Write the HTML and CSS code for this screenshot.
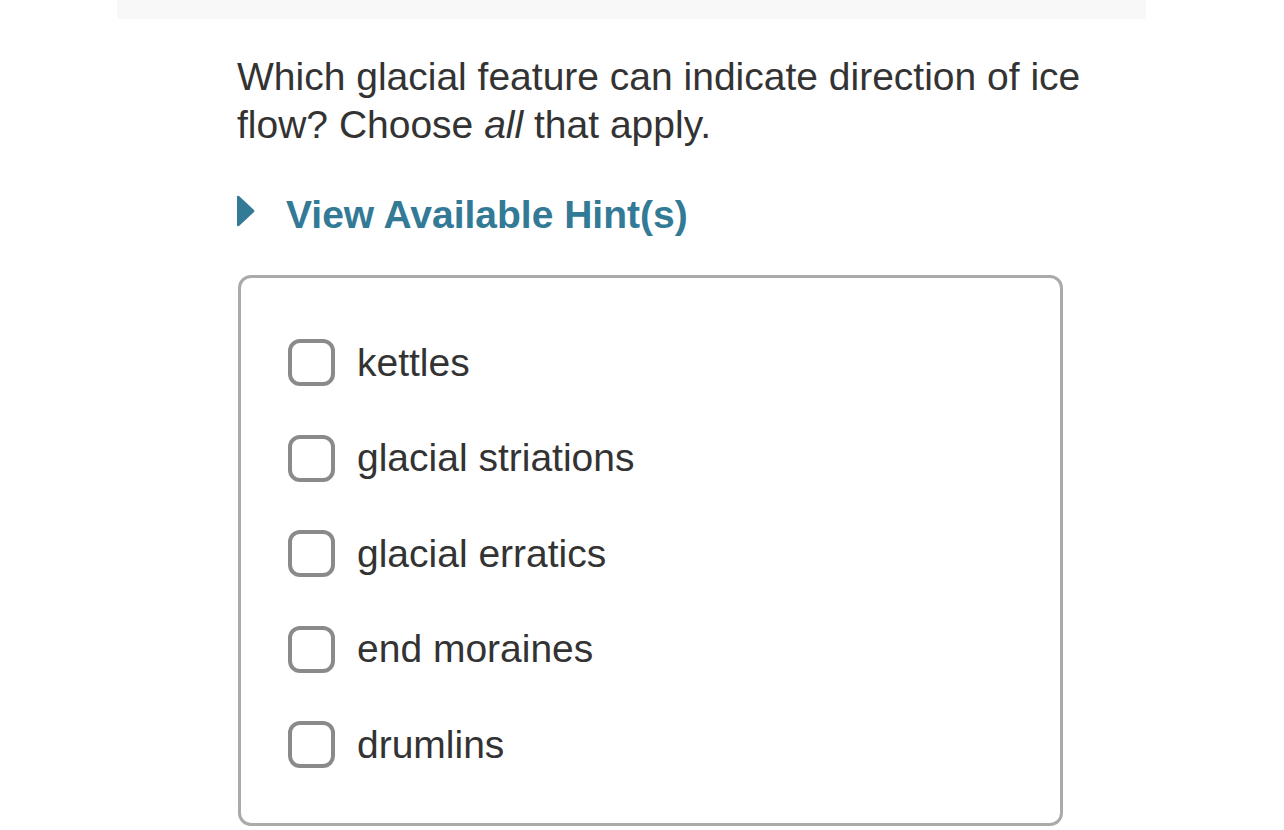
FILE: index.html
```html
<!DOCTYPE html>
<html>
<head>
<meta charset="utf-8">
<link rel="stylesheet" href="styles.css">
</head>
<body>
<div class="topbar"></div>
<div class="content">
  <p class="question">Which glacial feature can indicate direction of ice flow? Choose <em>all</em> that apply.</p>
  <div class="hint">
    <svg class="tri" width="18" height="32" viewBox="0 0 18 32"><path d="M2 1 L17 15 Q18 16 17 17 L2 31 Q0 32 0 30 L0 2 Q0 0 2 1 Z" fill="#337a96"/></svg>
    <span class="hint-text">View Available Hint(s)</span>
  </div>
  <div class="box">
    <label class="opt"><span class="cb"></span><span class="lbl">kettles</span></label>
    <label class="opt"><span class="cb"></span><span class="lbl">glacial striations</span></label>
    <label class="opt"><span class="cb"></span><span class="lbl">glacial erratics</span></label>
    <label class="opt"><span class="cb"></span><span class="lbl">end moraines</span></label>
    <label class="opt"><span class="cb"></span><span class="lbl">drumlins</span></label>
  </div>
</div>
</body>
</html>
```

FILE: styles.css
```css
html, body {
  margin: 0;
  padding: 0;
  background: #ffffff;
}
body {
  font-family: "Liberation Sans", Arial, sans-serif;
  color: #333333;
  width: 1284px;
  height: 830px;
  overflow: hidden;
}
.topbar {
  margin-left: 117px;
  width: 1029px;
  height: 19px;
  background: #f8f8f8;
}
.content {
  padding-left: 237px;
  padding-top: 34px;
}
.question {
  margin: 0;
  width: 880px;
  font-size: 39px;
  line-height: 48px;
  color: #333333;
}
.question em {
  font-style: italic;
}
.hint {
  display: flex;
  align-items: center;
  margin-top: 44px;
  height: 44px;
}
.tri {
  display: block;
  margin-right: 31px;
  margin-top: -8px;
}
.hint-text {
  font-weight: bold;
  font-size: 39px;
  color: #337a96;
}
.box {
  margin-top: 38px;
  margin-left: 1px;
  width: 772px;
  height: 508px;
  border: 3px solid #aaaaaa;
  border-radius: 13px;
  padding-top: 37px;
  padding-left: 47px;
}
.opt {
  display: flex;
  align-items: center;
  height: 95.5px;
}
.cb {
  display: block;
  width: 39px;
  height: 39px;
  border: 4px solid #8a8a8a;
  border-radius: 12px;
  margin-right: 22px;
  flex: none;
}
.lbl {
  font-size: 39px;
  color: #333333;
}
```
